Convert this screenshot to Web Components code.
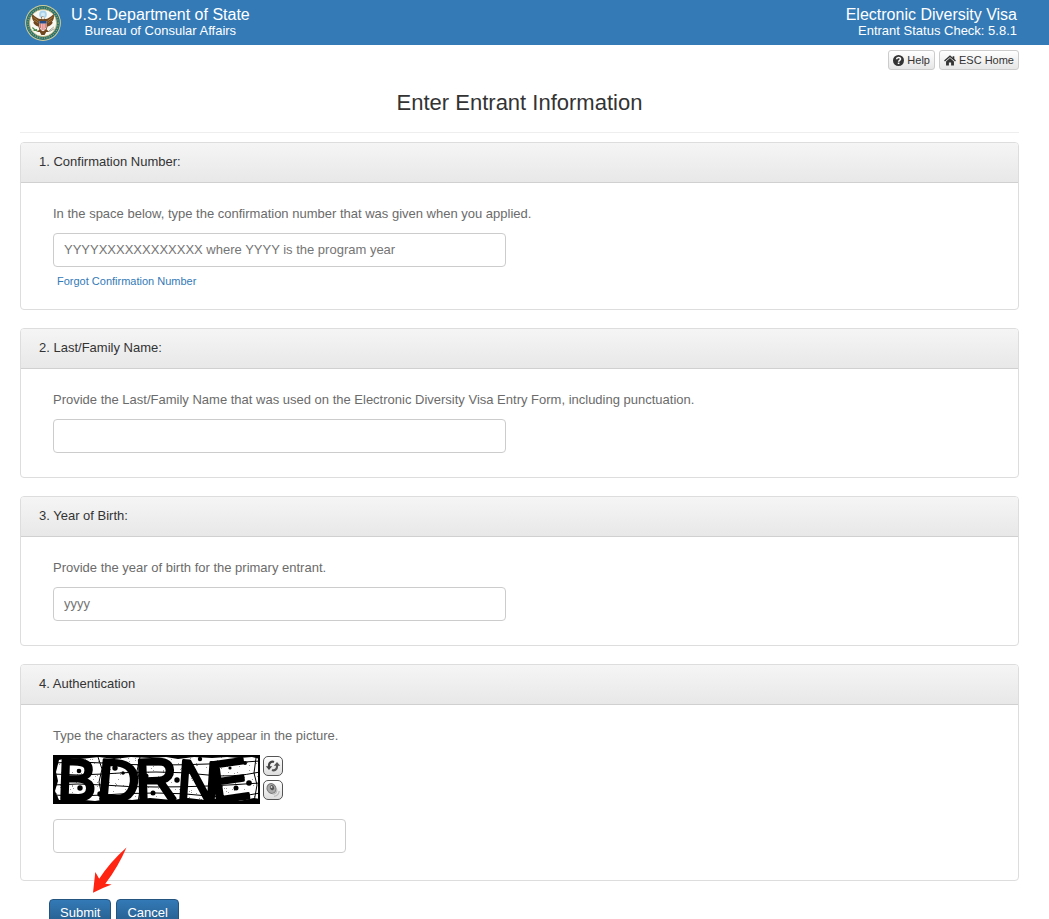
<!DOCTYPE html>
<html lang="en">
<head>
<meta charset="utf-8">
<meta name="viewport" content="width=device-width, initial-scale=1">
<title>Enter Entrant Information</title>
<style>
    body {
        margin: 0;
        background: #fff;
        color: #333;
        font: 13px/18px "Liberation Sans", Arial, sans-serif;
    }
    main {
        padding: 5px 30px 20px 20px;
    }
    nav {
        display: flex;
        justify-content: flex-end;
        gap: 4px;
    }
    h1 {
        margin: 21px 0 9px;
        padding-bottom: 17px;
        border-bottom: 1px solid #eee;
        font-size: 22px;
        line-height: 24px;
        font-weight: normal;
        text-align: center;
    }
    form {
        display: flex;
        flex-direction: column;
        gap: 18px;
    }
</style>
</head>
<body>

<site-header>
    <span slot="owner">U.S. Department of State</span>
    <span slot="bureau">Bureau of Consular Affairs</span>
    <span slot="product">Electronic Diversity Visa</span>
    <span slot="version">Entrant Status Check: 5.8.1</span>
</site-header>

<main>
    <nav>
        <tool-button icon="help">Help</tool-button>
        <tool-button icon="home">ESC Home</tool-button>
    </nav>
    <h1>Enter Entrant Information</h1>
    <form>
        <entry-panel>
            <span slot="heading">1. Confirmation Number:</span>
            <text-field placeholder="YYYYXXXXXXXXXXXX where YYYY is the program year">
                In the space below, type the confirmation number that was given when you applied.
                <forgot-link slot="after">Forgot Confirmation Number</forgot-link>
            </text-field>
        </entry-panel>
        <entry-panel>
            <span slot="heading">2. Last/Family Name:</span>
            <text-field>Provide the Last/Family Name that was used on the Electronic Diversity Visa Entry Form, including punctuation.</text-field>
        </entry-panel>
        <entry-panel>
            <span slot="heading">3. Year of Birth:</span>
            <text-field placeholder="yyyy">Provide the year of birth for the primary entrant.</text-field>
        </entry-panel>
        <entry-panel>
            <span slot="heading">4. Authentication</span>
            <text-field short>
                Type the characters as they appear in the picture.
                <captcha-picture slot="picture"></captcha-picture>
            </text-field>
        </entry-panel>
        <form-actions></form-actions>
    </form>
</main>

<script>
const ICONS = {
    help: `
        <svg width="11" height="11" viewBox="0 0 12 12" aria-hidden="true">
            <circle cx="6" cy="6" r="6" fill="#333"/>
            <path d="M3.9 4.6C4 2.2 8.2 2.1 8.2 4.4C8.2 5.8 6.2 5.7 6.1 7.3" fill="none" stroke="#fff" stroke-width="1.7"/>
            <rect x="5.2" y="8.2" width="1.8" height="1.7" fill="#fff"/>
        </svg>`,
    home: `
        <svg width="12" height="11" viewBox="0 0 13 12" aria-hidden="true">
            <path d="M.5 6.5 6.5 1.3l6 5.2" fill="none" stroke="#333" stroke-width="1.5"/>
            <path d="M9.4 1.4h1.8v3.8L9.4 3.7zM2.2 7.1l4.3-3.7 4.3 3.7V11.4H7.7V8.2H5.3v3.2H2.2z" fill="#333"/>
        </svg>`
};

class SiteHeader extends HTMLElement {

    constructor() {
        super();
        this.attachShadow({mode: 'open'});
    }

    connectedCallback() {
        this.shadowRoot.innerHTML = `
            ${this.templateCss()}
            ${this.template()}
        `;
    }

    template() {
        return `
            <header>
                ${this.templateSeal()}
                <div class="names left">
                    <div class="big"><slot name="owner"></slot></div>
                    <div><slot name="bureau"></slot></div>
                </div>
                <div class="names right">
                    <div class="big"><slot name="product"></slot></div>
                    <div><slot name="version"></slot></div>
                </div>
            </header>
        `;
    }

    templateSeal() {
        return `
            <svg width="36" height="36" viewBox="0 0 36 36" aria-hidden="true">
                <circle cx="18" cy="18" r="17.9" fill="#d3cf9a"/>
                <circle cx="18" cy="18" r="16.9" fill="#28706f"/>
                <circle cx="18" cy="18" r="15.2" fill="none" stroke="#8fa572" stroke-width="1.3" stroke-dasharray="1.1 1.3"/>
                <circle cx="18" cy="18" r="13.6" fill="#f7f8f2" stroke="#c3b16b" stroke-width=".8"/>
                <circle cx="18" cy="9.4" r="3.8" fill="#a9d3ed"/>
                <circle cx="18" cy="9.4" r="2" fill="#d5ebf5"/>
                <path d="M16.8 13.6C15 15 12 13.2 7.2 9c-.6 4 .2 6.3 2 8-.4.3-.8.2-1.2 0 1 2.5 3 4 5.4 4.4l1 3.2-2.6 2.3h3l1.6 3.2h3.2l1.6-3.2h3l-2.6-2.3 1-3.2c2.4-.4 4.4-1.9 5.4-4.4-.4.2-.8.3-1.2 0 1.8-1.7 2.6-4 2-8-4.8 4.2-7.8 6-9.6 4.6l-.2-1.8-1.6-.5-1.5 1z" fill="#70471f"/>
                <path d="M8.4 12.2l5.2 4M8.8 15l4.5 2.8m14.3-5.6-5.2 4m4.8-1.2-4.5 2.8" stroke="#b68a46" stroke-width=".7"/>
                <circle cx="18" cy="12.9" r="1.3" fill="#efe9db"/>
                <path d="M14.4 16h7.2v5.2c0 2.5-1.6 4-3.6 5.1-2-1.1-3.6-2.6-3.6-5.1z" fill="#fff"/>
                <path d="M15.3 18.3v5m1.8-5v6.9m1.9-6.9v6.9m1.8-6.9v5" stroke="#c9413c" stroke-width=".9"/>
                <path d="M14.4 16h7.2v2.5h-7.2z" fill="#284b86"/>
                <path d="M7.4 22.5c1.4 1.5 2.6 3 5 3.5M8.5 25.4l3.6-.8" stroke="#4c8a4c" stroke-width="1.3" fill="none"/>
                <path d="M28.8 22l-5 4m5.5-2.3-5 3" stroke="#8a8a79" stroke-width=".8"/>
            </svg>
        `;
    }

    templateCss() {
        return `
            <style>
                :host { display: block; }
                header {
                    display: flex;
                    align-items: flex-start;
                    padding: 5px 32px 4px 25px;
                    background: #337ab7;
                    color: #fff;
                }
                .names {
                    margin-top: 2px;
                    line-height: 16px;
                }
                .big { font-size: 16px; }
                .left {
                    margin-left: 10px;
                    text-align: center;
                }
                .right {
                    margin-left: auto;
                    text-align: right;
                }
            </style>
        `;
    }
}
customElements.define('site-header', SiteHeader);


class ToolButton extends HTMLElement {

    constructor() {
        super();
        this.attachShadow({mode: 'open'});
    }

    connectedCallback() {
        this.shadowRoot.innerHTML = `
            <style>
                :host { display: block; }
                button {
                    display: flex;
                    align-items: center;
                    gap: 3px;
                    padding: 0 4px;
                    border: 1px solid #ccc;
                    border-radius: 3px;
                    background: linear-gradient(#fff, #e6e6e6);
                    color: #333;
                    font: inherit;
                    font-size: 11px;
                    cursor: pointer;
                }
            </style>
            <button type="button">${ICONS[this.getAttribute('icon')]}<span><slot></slot></span></button>
        `;
    }
}
customElements.define('tool-button', ToolButton);


class EntryPanel extends HTMLElement {

    constructor() {
        super();
        this.attachShadow({mode: 'open'});
    }

    connectedCallback() {
        this.shadowRoot.innerHTML = `
            <style>
                :host { display: block; }
                section {
                    border: 1px solid #ddd;
                    border-radius: 4px;
                }
                h2 {
                    margin: 0;
                    padding: 10px 18px 11px;
                    border-bottom: 1px solid #d0d0d0;
                    border-radius: 3px 3px 0 0;
                    background: linear-gradient(#f5f5f5, #e8e8e8);
                    font-size: 13px;
                    font-weight: normal;
                }
                .body { padding: 22px 32px 19px; }
            </style>
            <section>
                <h2><slot name="heading"></slot></h2>
                <div class="body"><slot></slot></div>
            </section>
        `;
    }
}
customElements.define('entry-panel', EntryPanel);


class TextField extends HTMLElement {

    constructor() {
        super();
        this.attachShadow({mode: 'open'});
    }

    connectedCallback() {
        this.shadowRoot.innerHTML = `
            ${this.templateCss()}
            <label for="field"><slot></slot></label>
            <slot name="picture"></slot>
            <input id="field" type="text">
            <slot name="after"></slot>
        `;
        this.$input = this.shadowRoot.querySelector('input');
        this.$input.placeholder = this.getAttribute('placeholder') || '';
    }

    templateCss() {
        return `
            <style>
                :host { display: block; }
                label {
                    display: block;
                    margin-bottom: 10px;
                    color: #6b6b6b;
                }
                input {
                    display: block;
                    box-sizing: border-box;
                    width: 100%;
                    max-width: 453px;
                    height: 34px;
                    margin-bottom: 5px;
                    padding: 5px 10px 7px;
                    border: 1px solid #ccc;
                    border-radius: 4px;
                    background: #fff;
                    color: #555;
                    font: inherit;
                }
                input::placeholder { color: #757575; }
                :host([short]) input {
                    max-width: 293px;
                    margin-bottom: 8px;
                }
            </style>
        `;
    }
}
customElements.define('text-field', TextField);


class ForgotLink extends HTMLElement {

    constructor() {
        super();
        this.attachShadow({mode: 'open'});
    }

    connectedCallback() {
        this.shadowRoot.innerHTML = `
            <style>
                :host {
                    display: block;
                    padding-left: 4px;
                    font-size: 11px;
                }
                a {
                    color: #337ab7;
                    text-decoration: none;
                }
                a:hover { text-decoration: underline; }
            </style>
            <a href="#forgot"><slot></slot></a>
        `;
    }
}
customElements.define('forgot-link', ForgotLink);


class CaptchaPicture extends HTMLElement {

    constructor() {
        super();
        this.attachShadow({mode: 'open'});
    }

    connectedCallback() {
        this.shadowRoot.innerHTML = `
            ${this.templateCss()}
            ${this.templatePicture()}
            <div class="tools">
                <button type="button" aria-label="New picture">
                    <svg width="18" height="18" viewBox="0 0 18 18" aria-hidden="true">
                        <path d="M5 10.2V8.3C5 5.5 7.6 4 10 5" fill="none" stroke="#444" stroke-width="2.2"/>
                        <path d="M1.8 9.2h6.4L5 12.9z" fill="#444"/>
                        <path d="M13 7.8v1.9c0 2.8-2.6 4.3-5 3.3" fill="none" stroke="#555" stroke-width="2.2"/>
                        <path d="M9.8 8.8h6.4L13 5.1z" fill="#555"/>
                    </svg>
                </button>
                <button type="button" aria-label="Play sound">
                    <svg width="18" height="18" viewBox="0 0 18 18" aria-hidden="true">
                        <ellipse cx="7.5" cy="7.5" rx="4.4" ry="5" transform="rotate(-25 7.5 7.5)" fill="#aaa" stroke="#777"/>
                        <ellipse cx="8" cy="6.7" rx="2.1" ry="2.6" transform="rotate(-25 8 6.7)" fill="#555"/>
                        <circle cx="7.5" cy="6" r=".9" fill="#ddd"/>
                        <path d="M8.5 13.2c2.6-.2 4.4-2 4.4-4.8M10 15.4c3-.5 5-2.5 5.2-5.4" fill="none" stroke="#bbb" stroke-width="1.3"/>
                    </svg>
                </button>
            </div>
        `;
    }

    templatePicture() {
        const rows = [8, 19, 30, 40];
        const lines = rows.map((y, i) => {
            const d = i % 2 ? 2 : -2;
            return `<path d="M0 ${y}Q25 ${y + d} 50 ${y}T103 ${y - d}T155 ${y + 1}T207 ${y - 2}"/>`;
        }).join('');
        const dots = [
            [26, 16, 2.3], [27, 33, 2.7], [62, 13, 2.7], [70, 18, 1.7], [93, 21, 2.5],
            [100, 38, 2.5], [111, 28, 1.7], [116, 19, 2.1], [124, 25, 2.7], [147, 4, 2.2],
            [177, 13, 1.6], [183, 33, 2.5], [192, 8, 2], [196, 28, 2.8], [47, 39, 2.7]
        ].map(([x, y, r]) => `<circle cx="${x}" cy="${y}" r="${r}"/>`).join('');
        // light grain scattered between the letters
        let grain = '';
        for (let i = 0; i < 260; i++) {
            grain += `M${(i * 53 + i * i % 17) % 205} ${(i * 29 + i * i % 11) % 47}h1v1h-1z`;
        }
        return `
            <svg class="picture" width="207" height="49" viewBox="0 0 207 49" role="img" aria-label="Characters to type">
                <rect width="207" height="49" fill="#fff"/>
                <path d="${grain}" fill="#999"/>
                <g fill="none" stroke="#000">${lines}
                    <path d="M45 2l4 12-3 13 4 20M87 2l-3 14 4 13-3 18M203 3l-2 15 3 12-3 17"/>
                </g>
                <g>${dots}</g>
                <path d="M0 0h207v4l-8-2-13 1-12-1-15 1-18-1-16 2-12-2-16 1-19-1-17 2-15-2-19 2-13-1-8 2-3 12 2 9-3 10 4 9 15-1 21 2 19-3 18 2 18-2 22 2 16-2 17 2 18-2 16 3 15-3 6 1v5H0z"/>
                <path d="M205 0h2v49h-2z"/>
                <text x="4 43 83 123 160" y="44 44 45 45 48" rotate="2 5 -2 4 -8"
                      stroke="#000" stroke-width="3" stroke-linejoin="round">BDRNE</text>
            </svg>
        `;
    }

    templateCss() {
        return `
            <style>
                :host {
                    display: flex;
                    gap: 3px;
                    margin-bottom: 15px;
                }
                .picture {
                    display: block;
                    overflow: visible;
                }
                .picture text {
                    font: 58px "Liberation Sans", Arial, sans-serif;
                }
                .tools {
                    display: flex;
                    flex-direction: column;
                    gap: 4px;
                    padding-top: 1px;
                }
                button {
                    display: flex;
                    box-sizing: border-box;
                    width: 20px;
                    height: 20px;
                    padding: 0;
                    border: 1px solid #555;
                    border-radius: 5px;
                    background: linear-gradient(#fff, #ddd);
                    cursor: pointer;
                }
            </style>
        `;
    }
}
customElements.define('captcha-picture', CaptchaPicture);


class FormActions extends HTMLElement {

    constructor() {
        super();
        this.attachShadow({mode: 'open'});
    }

    connectedCallback() {
        this.shadowRoot.innerHTML = `
            <style>
                :host {
                    display: flex;
                    position: relative;
                    gap: 5px;
                    padding-left: 29px;
                }
                button {
                    padding: 4px 10px;
                    border: 1px solid #245580;
                    border-radius: 4px;
                    background: linear-gradient(#337ab7, #265a88);
                    color: #fff;
                    font: inherit;
                    cursor: pointer;
                }
                svg {
                    position: absolute;
                    left: 72px;
                    bottom: 100%;
                    margin-bottom: 5px;
                    pointer-events: none;
                }
            </style>
            <button type="submit">Submit</button>
            <button type="button">Cancel</button>
            <svg width="36" height="47" viewBox="0 0 36 47" aria-hidden="true">
                <path d="M34.5.4Q26 20 13.3 36.8L19.7 37.5Q10 41 1 45.8L3.3 25 7.2 31.7Q18 15 34.5.4z" fill="#ff2412"/>
            </svg>
        `;
        this.addEventListener('click', event => event.preventDefault());
    }
}
customElements.define('form-actions', FormActions);
</script>
</body>
</html>
